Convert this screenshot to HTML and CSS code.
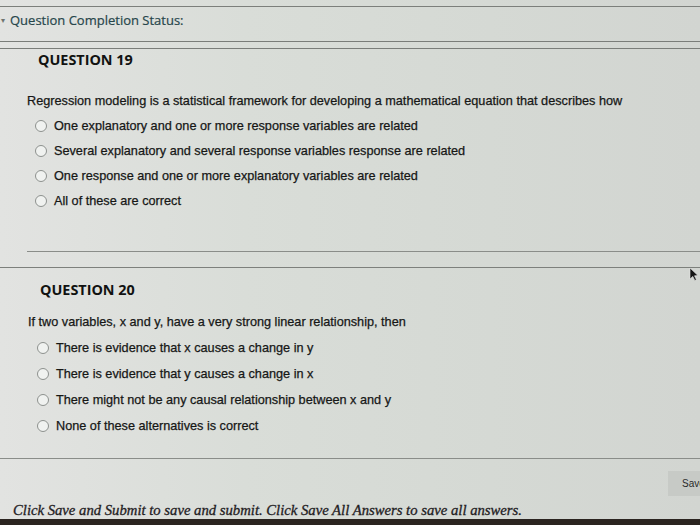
FILE: index.html
```html
<!DOCTYPE html>
<html>
<head>
<meta charset="utf-8">
<link rel="stylesheet" href="styles.css">
</head>
<body>
<div class="page">
  <div class="topline"></div>
  <div class="status"><span class="arrow">&#9662;</span>Question Completion Status:</div>
  <div class="dbl"></div>

  <section class="q q19">
    <h2 class="qtitle">QUESTION 19</h2>
    <p class="qtext">Regression modeling is a statistical framework for developing a mathematical equation that describes how</p>
    <ul class="opts">
      <li><span class="radio"></span>One explanatory and one or more response variables are related</li>
      <li><span class="radio"></span>Several explanatory and several response variables response are related</li>
      <li><span class="radio"></span>One response and one or more explanatory variables are related</li>
      <li><span class="radio"></span>All of these are correct</li>
    </ul>
    <div class="inner-rule"></div>
  </section>
  <div class="full-rule"></div>

  <section class="q q20">
    <h2 class="qtitle">QUESTION 20</h2>
    <p class="qtext">If two variables, x and y, have a very strong linear relationship, then</p>
    <ul class="opts">
      <li><span class="radio"></span>There is evidence that x causes a change in y</li>
      <li><span class="radio"></span>There is evidence that y causes a change in x</li>
      <li><span class="radio"></span>There might not be any causal relationship between x and y</li>
      <li><span class="radio"></span>None of these alternatives is correct</li>
    </ul>
  </section>

  <footer class="footer">
    <div class="btnrow"><span class="savebtn">Save</span></div>
    <p class="note">Click Save and Submit to save and submit. Click Save All Answers to save all answers.</p>
  </footer>
  <div class="edge"></div>
</div>
<svg class="cursor" width="10" height="14" viewBox="0 0 10 14"><path d="M1 1 L1 12 L3.8 9.4 L5.8 13.5 L7.4 12.7 L5.5 8.8 L9 8.6 Z" fill="#151515" stroke="#e8e8e8" stroke-width="0.6"/></svg>
</body>
</html>
```
FILE: styles.css
```css
html, body {
  margin: 0;
  padding: 0;
}
body {
  width: 700px;
  height: 525px;
  overflow: hidden;
  position: relative;
  background: linear-gradient(to right, #e2e3e1 0%, #d9ddd8 35%, #d5d9d4 70%, #d2d5d1 100%);
  font-family: "Liberation Sans", Arial, sans-serif;
  color: #1d1f1e;
}
.page {
  display: flex;
  flex-direction: column;
  height: 525px;
}
.topline {
  height: 6px;
  border-bottom: 1px solid #7c7f7b;
  flex: none;
}
.status {
  box-sizing: border-box;
  height: 34px;
  padding: 4px 0 0 1px;
  font-family: "Open Sans", sans-serif;
  font-size: 13px;
  line-height: 18px;
  color: #27464b;
  -webkit-text-stroke: 0.2px #27464b;
  display: flex;
  align-items: flex-start;
  flex: none;
}
.arrow {
  font-size: 8px;
  color: #6f7470;
  width: 9px;
  line-height: 18px;
  -webkit-text-stroke: 0;
}
.dbl {
  height: 6px;
  border-top: 1px solid #7a7d79;
  border-bottom: 1px solid #7a7d79;
  flex: none;
}
.q {
  flex: none;
}
.qtitle {
  margin: 0;
  font-family: "Open Sans", sans-serif;
  font-weight: 700;
  font-size: 14.4px;
  line-height: 18px;
  color: #111211;
}
.qtext {
  margin: 0;
  font-size: 12.7px;
  line-height: 18px;
  color: #161716;
  -webkit-text-stroke: 0.25px #161716;
}
.opts {
  list-style: none;
  margin: 0;
  padding: 0;
}
.opts li {
  display: flex;
  align-items: center;
  font-size: 12.7px;
  height: 25px;
  color: #161716;
  -webkit-text-stroke: 0.25px #161716;
}
.radio {
  box-sizing: border-box;
  width: 12px;
  height: 12px;
  border-radius: 50%;
  border: 1px solid #8d918e;
  background: #f0f2f0;
  margin-right: 7px;
  flex: none;
}
.q19 .qtitle {
  padding: 2px 0 0 38px;
}
.q19 .qtext {
  margin-top: 23px;
  padding-left: 27px;
}
.q19 .opts {
  margin-top: 3px;
  padding-left: 35px;
}
.inner-rule {
  margin: 38px 0 0 27px;
  border-top: 1px solid #8a8d89;
}
.full-rule {
  margin-top: 15px;
  border-top: 1px solid #7d807c;
  flex: none;
}
.q20 .qtitle {
  padding: 13px 0 0 40px;
}
.q20 .qtext {
  margin-top: 14px;
  padding-left: 28px;
}
.q20 .opts {
  margin-top: 4px;
  padding-left: 37px;
}
.q20 .opts li {
  height: 26px;
}
.footer {
  margin-top: 19px;
  border-top: 1px solid #8a8d89;
  flex: 1;
  display: flex;
  flex-direction: column;
}
.btnrow {
  display: flex;
  justify-content: flex-end;
  padding-top: 12px;
}
.savebtn {
  box-sizing: border-box;
  width: 32px;
  height: 25px;
  background: #c7cac6;
  font-size: 10px;
  line-height: 25px;
  padding-left: 14px;
  color: #2a2b2a;
  overflow: hidden;
  white-space: nowrap;
}
.note {
  margin: 0;
  padding: 5px 0 0 13px;
  font-family: "Liberation Serif", "Times New Roman", serif;
  font-style: italic;
  font-size: 14.7px;
  line-height: 18px;
  color: #1f201f;
  -webkit-text-stroke: 0.3px #1f201f;
}
.edge {
  height: 6px;
  background: #2b2420;
  flex: none;
}
.cursor {
  position: absolute;
  left: 689px;
  top: 267px;
}
```
